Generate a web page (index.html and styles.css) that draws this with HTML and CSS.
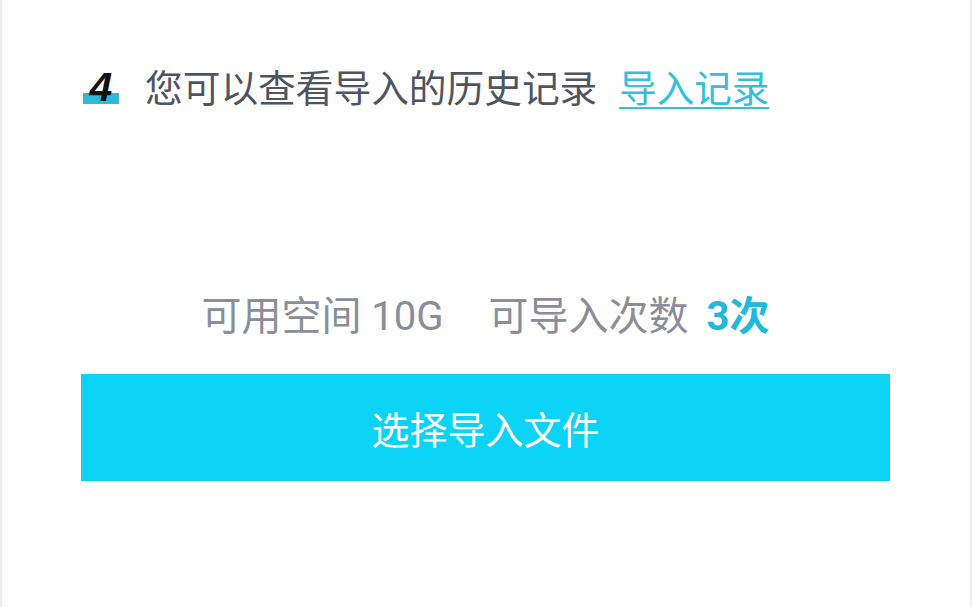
FILE: index.html
```html
<!DOCTYPE html>
<html lang="zh-CN">
<head>
<meta charset="utf-8">
<title>导入</title>
<link rel="stylesheet" href="styles.css">
</head>
<body>
<div class="page">
  <div class="step">
    <span class="step-num">4</span>
    <span class="step-text">您可以查看导入的历史记录</span>
    <a class="step-link" href="#">导入记录</a>
  </div>
  <div class="quota">
    <span class="quota-item">可用空间 10G</span>
    <span class="quota-item quota-gap">可导入次数</span>
    <span class="quota-count">3次</span>
  </div>
  <button class="import-btn" type="button">选择导入文件</button>
</div>
</body>
</html>
```

FILE: styles.css
```css
html, body {
  margin: 0;
  padding: 0;
  background: #ffffff;
}

.page {
  box-sizing: border-box;
  width: 972px;
  height: 607px;
  border-left: 2px solid #ececec;
  border-right: 2px solid #ececec;
  padding: 0 80px 0 79px;
  font-family: Roboto, "Noto Sans CJK SC", sans-serif;
  display: flex;
  flex-direction: column;
}

.step {
  display: flex;
  align-items: center;
  margin-top: 66px;
  height: 46px;
}

.step-num {
  width: 36px;
  height: 34px;
  margin-left: 2px;
  margin-bottom: 4px;
  display: flex;
  justify-content: center;
  align-items: flex-end;
  font-family: "Liberation Sans", Arial, sans-serif;
  font-weight: bold;
  font-style: italic;
  font-size: 41px;
  line-height: 34px;
  color: #111111;
  background: linear-gradient(to top, #2bbcd9 11px, transparent 11px);
}

.step-text {
  margin-left: 26px;
  font-size: 37.7px;
  line-height: 46px;
  color: #4f5461;
}

.step-link {
  margin-left: 22px;
  font-size: 37.5px;
  line-height: 46px;
  color: #35bfdc;
  text-decoration: underline;
  text-decoration-thickness: 2px;
  text-underline-offset: 5px;
}

.quota {
  margin-top: 180px;
  height: 50px;
  display: flex;
  justify-content: center;
  align-items: center;
  font-size: 40px;
  line-height: 50px;
  color: #8a8e98;
}

.quota-gap {
  margin-left: 45px;
}

.quota-count {
  margin-left: 18px;
  font-weight: bold;
  color: #1fb9da;
}

.import-btn {
  margin-top: 32px;
  height: 107px;
  width: 100%;
  border: none;
  border-radius: 0;
  background: #0bd3f5;
  color: #ffffff;
  font-family: Roboto, "Noto Sans CJK SC", sans-serif;
  font-size: 38px;
  padding: 0;
  cursor: pointer;
}
```
